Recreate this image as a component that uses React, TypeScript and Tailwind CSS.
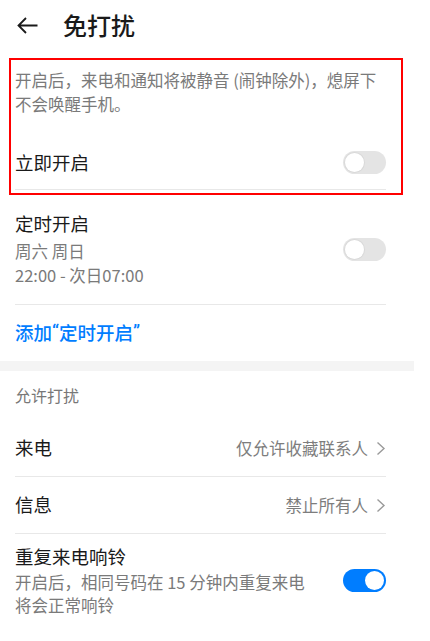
import React from "react";

const FONT = "font-['Noto_Sans_CJK_SC','Noto_Sans',sans-serif]";

function Toggle({ on }: { on?: boolean }) {
  return (
    <div
      className={`w-[43px] h-[23px] rounded-full flex items-center px-[2px] shrink-0 ${
        on ? "bg-[#007dff] justify-end" : "bg-[#e4e4e4] justify-start"
      }`}
    >
      <div className={`w-[19px] h-[19px] rounded-full bg-white ${on ? "" : "shadow-[0_0_0_1px_#d9d9d9]"}`} />
    </div>
  );
}

function Chevron() {
  return (
    <svg width="10" height="15" viewBox="0 0 10 15" className="ml-[8px]">
      <path d="M1.5 1.5 L8 7.5 L1.5 13.5" fill="none" stroke="#9a9a9a" strokeWidth="1.4" />
    </svg>
  );
}

function NavRow({ label, value }: { label: string; value: string }) {
  return (
    <div className="h-[57px] flex items-center justify-between border-b border-[#e8e8e8]">
      <span className="text-[18.5px] text-[#1a1a1a]">{label}</span>
      <span className="flex items-center text-[16.5px] text-[#7d7d7d]">
        {value}
        <Chevron />
      </span>
    </div>
  );
}

export default function App() {
  return (
    <div className={`relative w-[430px] h-[641px] overflow-hidden bg-white ${FONT}`}>
      <div className="w-[414px]">
        {/* Header */}
        <div className="h-[50px] flex items-center pl-[17px]">
          <svg width="21" height="17" viewBox="0 0 21 17">
            <path d="M9 1 L1.5 8.5 L9 16 M1.5 8.5 H20.5" fill="none" stroke="#1a1a1a" strokeWidth="1.8" />
          </svg>
          <span className="ml-[25px] text-[24px] font-medium text-[#1a1a1a] leading-none">免打扰</span>
        </div>

        <div className="pl-[15px] pr-[28px]">
          {/* Description */}
          <p className="mt-[18px] text-[16.5px] leading-[24px] text-[#7a7a7a] whitespace-nowrap">
            开启后，来电和通知将被静音 (闹钟除外)，熄屏下
            <br />
            不会唤醒手机。
          </p>

          <div className="mt-[20px] h-[54px] flex items-center justify-between border-b border-[#e8e8e8]">
            <span className="text-[18.5px] text-[#1a1a1a]">立即开启</span>
            <Toggle />
          </div>

          <div className="pt-[21px] pb-[17px] flex items-center justify-between border-b border-[#e8e8e8]">
            <div>
              <div className="text-[18.5px] leading-[24px] text-[#1a1a1a]">定时开启</div>
              <div className="mt-[4px] text-[16.5px] leading-[24px] text-[#7a7a7a]">周六 周日</div>
              <div className="text-[16.5px] leading-[24px] text-[#7a7a7a]">22:00 - 次日07:00</div>
            </div>
            <Toggle />
          </div>

          <div className="h-[56px] flex items-center text-[18.5px] font-medium text-[#007dff]">
            添加<span className="font-['Roboto',sans-serif]">“</span>定时开启<span className="font-['Roboto',sans-serif]">”</span>
          </div>
        </div>

        <div className="h-[10px] bg-[#f4f4f4]" />

        <div className="pl-[15px] pr-[28px]">
          <div className="pt-[13px] pb-[14px] text-[16px] leading-[22px] text-[#777777]">允许打扰</div>
          <NavRow label="来电" value="仅允许收藏联系人" />
          <NavRow label="信息" value="禁止所有人" />
          <div className="pt-[10px] flex items-center justify-between">
            <div>
              <div className="text-[18.5px] leading-[24px] text-[#1a1a1a]">重复来电响铃</div>
              <div className="mt-[3px] text-[16.5px] leading-[23px] text-[#7a7a7a] whitespace-nowrap">
                开启后，相同号码在 15 分钟内重复来电
                <br />
                将会正常响铃
              </div>
            </div>
            <Toggle on />
          </div>
        </div>
      </div>

      {/* Annotation box */}
      <div className="absolute left-[9px] top-[58px] w-[394px] h-[137px] border-2 border-[#ff0000] pointer-events-none" />
    </div>
  );
}
